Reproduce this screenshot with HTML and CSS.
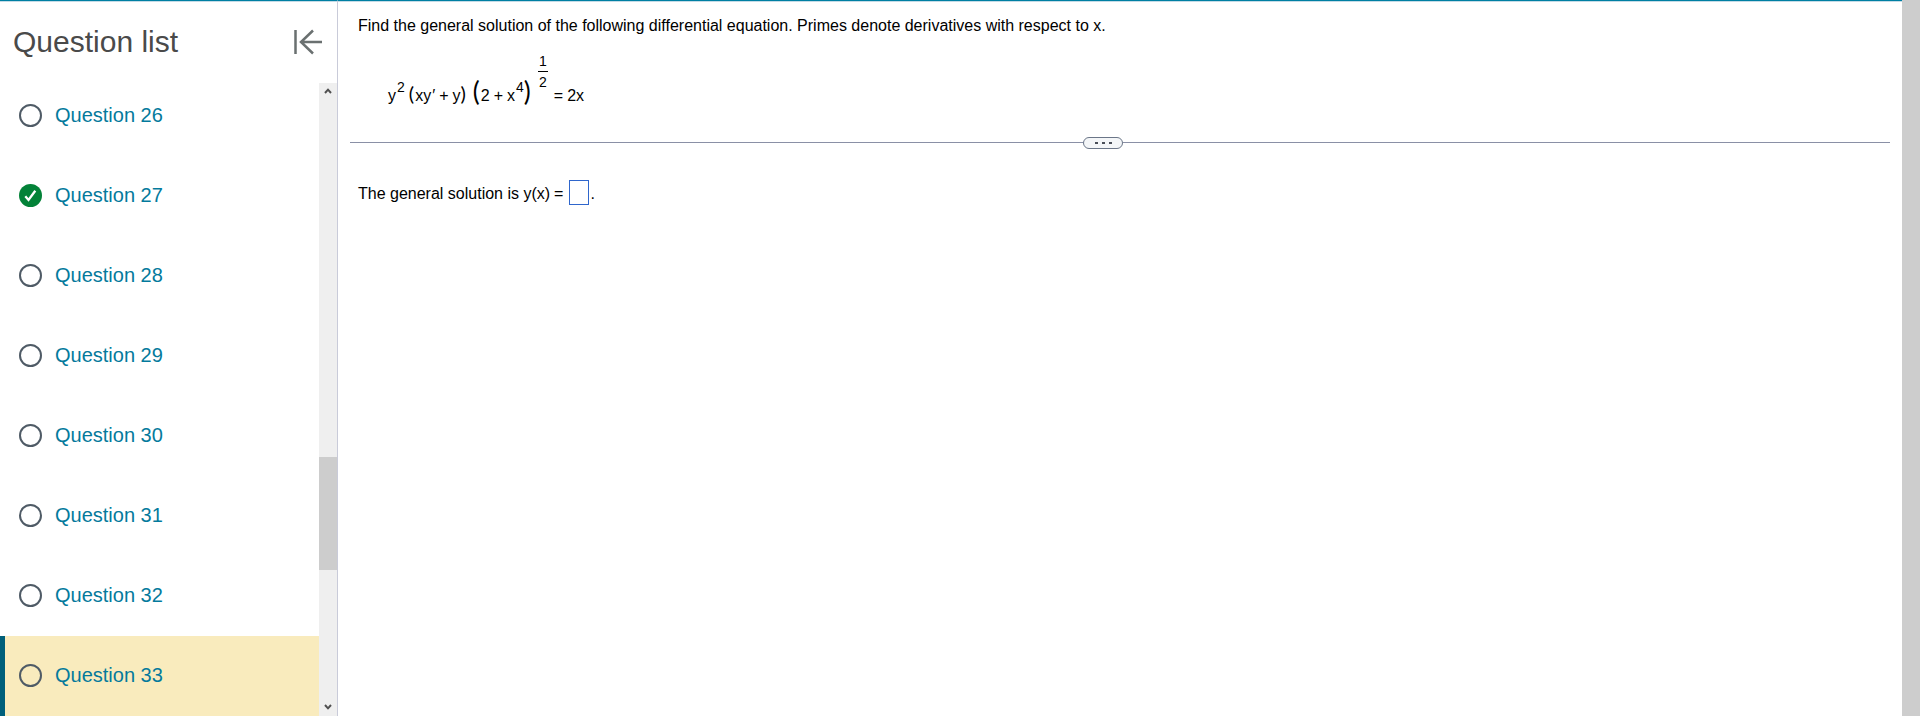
FILE: index.html
```html
<!DOCTYPE html>
<html lang="en">
<head>
  <meta charset="UTF-8">
  <meta name="viewport" content="width=device-width, initial-scale=1.0">
  <title>Question list</title>
  <link rel="stylesheet" href="styles.css">
</head>
<body>
  <div class="app">
    <aside class="sidebar">
      <div class="sidebar-header">
        <h1>Question list</h1>
        <button class="collapse" aria-label="Collapse question list">
          <svg width="30" height="26" viewBox="0 0 30 26" fill="none" stroke="#6a7070" stroke-width="2.5">
            <path d="M2.5 1v24M29 13H8M20 1.500L8 13l12 11.500" />
          </svg>
        </button>
      </div>
      <div class="list-wrap">
        <ul class="questions">
          <li><a href="#q26"><span class="ring"></span>Question 26</a></li>
          <li>
            <a href="#q27">
              <svg class="done" width="23" height="23" viewBox="0 0 23 23">
                <circle cx="11.500" cy="11.500" r="11.500" fill="#038238" />
                <path d="M6.300 12.300l3.200 3.700 6.800-9.300" fill="none" stroke="#fff" stroke-width="2.300" />
              </svg>Question 27</a>
          </li>
          <li><a href="#q28"><span class="ring"></span>Question 28</a></li>
          <li><a href="#q29"><span class="ring"></span>Question 29</a></li>
          <li><a href="#q30"><span class="ring"></span>Question 30</a></li>
          <li><a href="#q31"><span class="ring"></span>Question 31</a></li>
          <li><a href="#q32"><span class="ring"></span>Question 32</a></li>
          <li class="current"><a href="#q33"><span class="ring"></span>Question 33</a></li>
        </ul>
        <div class="scrollbar">
          <svg width="8" height="6" viewBox="0 0 8 6"><path d="M1 5l3-3.300L7 5" fill="none" stroke="#505050" stroke-width="2" /></svg>
          <div class="track"><div class="thumb"></div></div>
          <svg width="8" height="6" viewBox="0 0 8 6"><path d="M1 1l3 3.300L7 1" fill="none" stroke="#505050" stroke-width="2" /></svg>
        </div>
      </div>
    </aside>

    <main class="content">
      <p class="prompt">Find the general solution of the following differential equation. Primes denote derivatives with respect to x.</p>

      <div class="equation">
        <span>y</span><span class="sup">2</span>
        <span class="paren gap-s">(</span><span>xy</span><span class="prime">′</span>
        <span class="op">+</span><span>y</span><span class="paren">)</span>
        <span class="big-paren gap-m">(</span><span>2</span><span class="op">+</span><span>x</span><span class="sup">4</span><span class="big-paren">)</span>
        <span class="frac"><span>1</span><span class="den">2</span></span>
        <span class="gap-m">=</span><span class="gap-s">2x</span>
      </div>

      <div class="divider">
        <button class="more" aria-label="Resize panes"><i></i><i></i><i></i></button>
      </div>

      <div class="answer">
        <label for="answer">The general solution is y(x)<span class="eq">=</span></label>
        <input id="answer" type="text" autocomplete="off"><span>.</span>
      </div>
    </main>

    <div class="page-scroll"></div>
  </div>
</body>
</html>
```
FILE: styles.css
```css
* {
  box-sizing: border-box;
}
body {
  margin: 0;
  font-family: Arial, "Liberation Sans", sans-serif;
  font-size: 16px;
  color: #000;
  background: #fff;
}
.app {
  display: flex;
  height: 100vh;
  overflow: hidden;
}

/* sidebar */
.sidebar {
  width: 338px;
  flex: none;
  display: flex;
  flex-direction: column;
  border-top: 1px solid #007fa3;
  border-right: 1px solid #c9cbd9;
  box-shadow: inset 0 1px #c4dbe6;
}
.sidebar-header {
  display: flex;
  align-items: center;
  justify-content: space-between;
  height: 75px;
  flex: none;
  padding: 6px 14px 0 13px;
}
h1 {
  margin: 0;
  font-size: 30px;
  font-weight: normal;
  color: #4a4a4a;
}
.collapse {
  display: flex;
  padding: 0;
  border: none;
  background: none;
  cursor: pointer;
}
.list-wrap {
  display: flex;
  flex: 1;
  min-height: 0;
}
.questions {
  flex: 1;
  margin: 0;
  padding: 0;
  list-style: none;
  overflow: hidden;
}
.questions li {
  height: 80px;
  border-left: 5px solid transparent;
}
.questions .current {
  background: #f9ebbd;
  border-left-color: #005f7a;
}
.questions a {
  display: flex;
  align-items: center;
  gap: 13px;
  height: 100%;
  padding: 0 0 2px 14px;
  font-size: 20px;
  color: #047a9c;
  text-decoration: none;
}
.ring {
  width: 23px;
  height: 23px;
  border: 2px solid #4f5b66;
  border-radius: 50%;
}
.scrollbar {
  display: flex;
  flex-direction: column;
  align-items: center;
  width: 18px;
  margin-top: 7px;
  padding: 5px 0 6px;
  background: #efefef;
}
.track {
  flex: 1;
  align-self: stretch;
  padding-top: 363px;
}
.thumb {
  height: 113px;
  background: #cdcdcd;
}

/* exercise */
.content {
  flex: 1;
  border-top: 1px solid #007fa3;
  box-shadow: inset 0 1px #c4dbe6;
  padding: 16px 12px 0;
}
.prompt {
  margin: 0;
  padding-left: 8px;
  line-height: 18px;
}
.equation {
  display: flex;
  align-items: baseline;
  height: 74px;
  padding: 48px 0 0 38px;
  line-height: 16px;
}
.sup {
  position: relative;
  top: -9px;
  margin-left: 1px;
  font-size: 14px;
}
.paren,
.big-paren {
  margin-right: 1px;
  font-family: Lato, "Liberation Sans", sans-serif;
}
.paren {
  font-size: 20px;
}
.big-paren {
  font-size: 26px;
}
.prime {
  padding-left: 1px;
}
.op {
  padding: 0 4px;
}
.gap-s {
  margin-left: 4px;
}
.gap-m {
  margin-left: 6px;
}
.frac {
  position: relative;
  top: -35px;
  display: flex;
  flex-direction: column;
  align-items: center;
  width: 10px;
  margin-left: 6px;
  font-size: 14px;
}
.den {
  align-self: stretch;
  margin-top: 2px;
  padding-top: 2px;
  border-top: 1px solid #000;
  text-align: center;
}
.divider {
  display: flex;
  align-items: center;
  margin-top: 28px;
}
.divider::before,
.divider::after {
  content: "";
  height: 1px;
  margin-bottom: 1px;
  background: #8a90a6;
}
.divider::before {
  flex: 733;
}
.divider::after {
  flex: 767;
}
.more {
  display: flex;
  align-items: center;
  justify-content: center;
  gap: 4px;
  width: 40px;
  height: 12px;
  padding: 0;
  border: 1px solid #6b7688;
  border-radius: 6px;
  background: #f4f6f8;
  cursor: pointer;
}
.more i {
  width: 3px;
  height: 2px;
  background: #4a4f58;
}
.answer {
  display: flex;
  align-items: center;
  margin-top: 31px;
  padding-left: 8px;
}
.answer label,
.answer > span {
  padding-top: 2px;
}
.eq {
  margin-left: 4px;
}
.answer input {
  width: 20px;
  height: 25px;
  margin: 0 1px 0 6px;
  padding: 0 2px;
  border: 1px solid #2f66cc;
  font: inherit;
}

.page-scroll {
  width: 18px;
  background: #cdcdcd;
}
```
